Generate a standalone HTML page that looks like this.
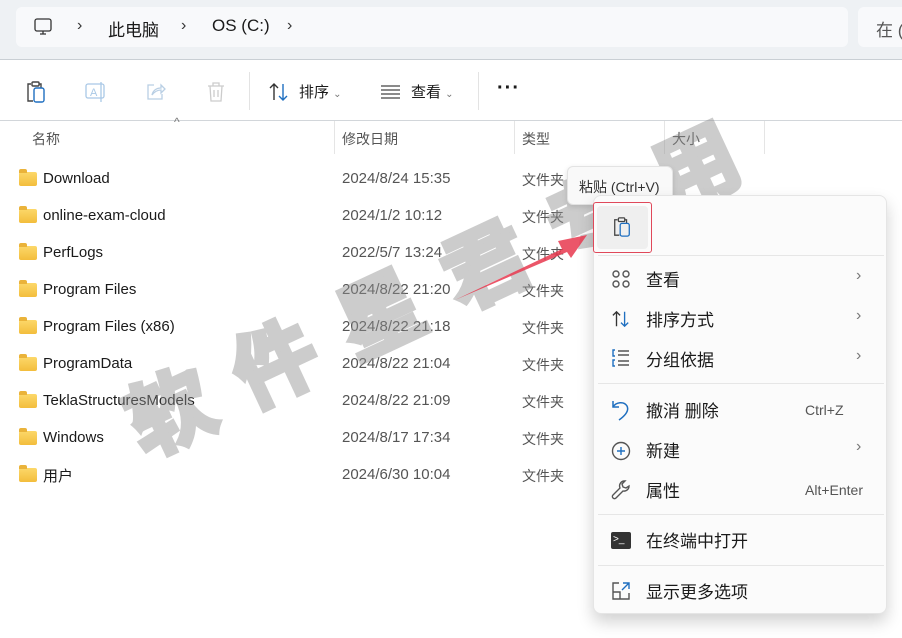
<!DOCTYPE html>
<html><head><meta charset="utf-8"><style>
*{margin:0;padding:0;box-sizing:border-box}
body{width:902px;height:638px;overflow:hidden;background:#fff;font-family:"Liberation Sans","Noto Sans CJK SC",sans-serif;position:relative;color:#1a1a1a}
.top{position:absolute;left:0;top:0;width:902px;height:60px;background:#eef1f4;border-bottom:1px solid #c9cfd4}
.addr{position:absolute;left:16px;top:7px;width:832px;height:40px;background:#f8f9fb;border-radius:6px}
.srch{position:absolute;left:858px;top:7px;width:60px;height:40px;background:#f8f9fb;border-radius:6px}
.t{position:absolute;white-space:nowrap}
.tb{position:absolute;top:61px;left:0;width:902px;height:60px;border-bottom:1px solid #d2d6da;background:#fff}
.vs{position:absolute;top:11px;width:1px;height:38px;background:#e3e3e3}
.row{position:absolute;left:0;height:37px;width:600px;font-size:15px}
.fold{position:absolute;left:19px;top:11px;width:18px;height:14px;background:linear-gradient(#fcd86a,#f3bd3c);border-radius:2px}
.fold:before{content:"";position:absolute;left:0;top:-3px;width:8px;height:4px;background:#eab33a;border-radius:2px 2px 0 0}
.menu{position:absolute;left:593px;top:195px;width:294px;height:419px;background:#fbfbfb;border:1px solid #e5e5e5;border-radius:8px;box-shadow:0 8px 16px rgba(0,0,0,.18)}
.mi{position:absolute;left:52px;font-size:17px;color:#1a1a1a}
.sc{position:absolute;font-size:14px;color:#555}
.ch{position:absolute;left:262px;font-size:16px;color:#777}
.sep{position:absolute;left:4px;width:286px;height:1px;background:#e6e6e6}
.wm{position:absolute;left:130px;top:365px;font-size:84px;font-weight:bold;color:#8f8f8f;-webkit-text-stroke:5px #8f8f8f;opacity:.45;transform:rotate(-25deg);transform-origin:left center;letter-spacing:32px;font-family:"Noto Sans CJK SC",sans-serif;white-space:nowrap}
</style></head><body>
<div class="top"><div class="addr"></div><div class="srch"></div>
<svg class="t" style="left:33px;top:17px" width="20" height="20" viewBox="0 0 20 20" fill="none" stroke="#333" stroke-width="1.3"><rect x="2" y="2" width="16" height="12" rx="2"/><path d="M7 17h6M10 14v3"/></svg>
<div class="t" style="left:77px;top:17px;font-size:16px;color:#333">›</div>
<div class="t" style="left:108px;top:16px;font-size:17px">此电脑</div>
<div class="t" style="left:181px;top:17px;font-size:16px;color:#333">›</div>
<div class="t" style="left:212px;top:16px;font-size:17px">OS (C:)</div>
<div class="t" style="left:287px;top:17px;font-size:16px;color:#333">›</div>
<div class="t" style="left:876px;top:16px;font-size:17px;color:#555">在 (</div>
</div>
<div class="tb">
<svg class="t" style="left:25px;top:19px" width="22" height="24" viewBox="0 0 22 24" fill="none" stroke-width="1.4"><path d="M6 4H3v17h5" stroke="#444"/><rect x="7" y="2" width="7" height="4" rx="1" stroke="#444"/><path d="M14 4h2v4" stroke="#444"/><rect x="9" y="8" width="10" height="14" rx="2" stroke="#1f6fc0"/></svg>
<svg class="t" style="left:84px;top:20px" width="24" height="22" viewBox="0 0 24 22" fill="none" stroke="#a9c8e6" stroke-width="1.3"><rect x="2" y="3" width="18" height="14" rx="2"/><text x="6" y="15" font-size="11" fill="#a9c8e6" stroke="none">A</text><path d="M17 1v20"/></svg>
<svg class="t" style="left:145px;top:20px" width="22" height="22" viewBox="0 0 22 22" fill="none" stroke="#b9cfe4" stroke-width="1.3"><path d="M9 4H3v14h14v-5"/><path d="M7 14c1-5 5-7 9-7V4l4 4-4 4V9c-3 0-6 1-9 5z"/></svg>
<svg class="t" style="left:206px;top:20px" width="20" height="22" viewBox="0 0 20 22" fill="none" stroke="#ccc" stroke-width="1.3"><path d="M2 5h16M7 5V2h6v3M4 5l1 15h10l1-15M8 9v7M12 9v7"/></svg>
<div class="vs" style="left:249px"></div>
<svg class="t" style="left:268px;top:21px" width="22" height="20" viewBox="0 0 22 20" fill="none" stroke-width="1.4"><path d="M6 18V2M2 6l4-4 4 4" stroke="#333"/><path d="M15 2v16M11 14l4 4 4-4" stroke="#1f6fc0"/></svg>
<div class="t" style="left:299px;top:20px;font-size:15px">排序 <span style="font-size:10px;color:#777">⌄</span></div>
<svg class="t" style="left:380px;top:23px" width="22" height="16" viewBox="0 0 22 16" stroke="#444" stroke-width="1.3"><path d="M1 2h19M1 6h19M1 10h19M1 14h19"/></svg>
<div class="t" style="left:411px;top:20px;font-size:15px">查看 <span style="font-size:10px;color:#777">⌄</span></div>
<div class="vs" style="left:478px"></div>
<div class="t" style="left:497px;top:16px;font-size:20px;font-weight:bold;letter-spacing:1px">···</div>
</div>
<div class="t" style="left:174px;top:115px;font-size:12px;color:#777">^</div>
<div class="t" style="left:32px;top:129px;font-size:14px;color:#555">名称</div>
<div class="t" style="left:334px;top:121px;width:1px;height:33px;background:#e5e5e5"></div>
<div class="t" style="left:342px;top:129px;font-size:14px;color:#555">修改日期</div>
<div class="t" style="left:514px;top:121px;width:1px;height:33px;background:#e5e5e5"></div>
<div class="t" style="left:522px;top:129px;font-size:14px;color:#555">类型</div>
<div class="t" style="left:664px;top:121px;width:1px;height:33px;background:#e5e5e5"></div>
<div class="t" style="left:672px;top:129px;font-size:14px;color:#555">大小</div>
<div class="t" style="left:764px;top:121px;width:1px;height:33px;background:#e5e5e5"></div>

<div class="row" style="top:161px"><div class="fold"></div><span class="t" style="left:43px;top:9px">Download</span><span class="t" style="left:342px;top:9px;color:#555">2024/8/24 15:35</span><span class="t" style="left:522px;top:9px;color:#555;font-size:14px">文件夹</span></div>
<div class="row" style="top:198px"><div class="fold"></div><span class="t" style="left:43px;top:9px">online-exam-cloud</span><span class="t" style="left:342px;top:9px;color:#555">2024/1/2 10:12</span><span class="t" style="left:522px;top:9px;color:#555;font-size:14px">文件夹</span></div>
<div class="row" style="top:235px"><div class="fold"></div><span class="t" style="left:43px;top:9px">PerfLogs</span><span class="t" style="left:342px;top:9px;color:#555">2022/5/7 13:24</span><span class="t" style="left:522px;top:9px;color:#555;font-size:14px">文件夹</span></div>
<div class="row" style="top:272px"><div class="fold"></div><span class="t" style="left:43px;top:9px">Program Files</span><span class="t" style="left:342px;top:9px;color:#555">2024/8/22 21:20</span><span class="t" style="left:522px;top:9px;color:#555;font-size:14px">文件夹</span></div>
<div class="row" style="top:309px"><div class="fold"></div><span class="t" style="left:43px;top:9px">Program Files (x86)</span><span class="t" style="left:342px;top:9px;color:#555">2024/8/22 21:18</span><span class="t" style="left:522px;top:9px;color:#555;font-size:14px">文件夹</span></div>
<div class="row" style="top:346px"><div class="fold"></div><span class="t" style="left:43px;top:9px">ProgramData</span><span class="t" style="left:342px;top:9px;color:#555">2024/8/22 21:04</span><span class="t" style="left:522px;top:9px;color:#555;font-size:14px">文件夹</span></div>
<div class="row" style="top:383px"><div class="fold"></div><span class="t" style="left:43px;top:9px">TeklaStructuresModels</span><span class="t" style="left:342px;top:9px;color:#555">2024/8/22 21:09</span><span class="t" style="left:522px;top:9px;color:#555;font-size:14px">文件夹</span></div>
<div class="row" style="top:420px"><div class="fold"></div><span class="t" style="left:43px;top:9px">Windows</span><span class="t" style="left:342px;top:9px;color:#555">2024/8/17 17:34</span><span class="t" style="left:522px;top:9px;color:#555;font-size:14px">文件夹</span></div>
<div class="row" style="top:457px"><div class="fold"></div><span class="t" style="left:43px;top:8px">用户</span><span class="t" style="left:342px;top:9px;color:#555">2024/6/30 10:04</span><span class="t" style="left:522px;top:9px;color:#555;font-size:14px">文件夹</span></div>

<div class="wm">软件星君专用</div>

<div class="t" style="left:567px;top:166px;width:106px;height:39px;background:#f9f9f9;border:1px solid #e3e3e3;border-radius:6px;box-shadow:0 2px 6px rgba(0,0,0,.12);font-size:14px;padding:10px 0 0 11px;color:#333">粘贴 (Ctrl+V)</div>

<div class="menu">
<div class="t" style="left:-1px;top:6px;width:59px;height:51px;border:1.5px solid #e0485a;border-radius:3px"></div>
<div class="t" style="left:3px;top:10px;width:51px;height:43px;background:#efefef;border-radius:4px"></div>
<svg class="t" style="left:18px;top:19px" width="20" height="24" viewBox="0 0 22 24" fill="none" stroke-width="1.4"><path d="M6 4H3v17h5" stroke="#444"/><rect x="7" y="2" width="7" height="4" rx="1" stroke="#444"/><path d="M14 4h2v4" stroke="#444"/><rect x="9" y="8" width="10" height="14" rx="2" stroke="#1f6fc0"/></svg>
<div class="sep" style="top:59px"></div>
<svg class="t" style="left:18px;top:74px" width="18" height="18" viewBox="0 0 18 18" fill="none" stroke="#555" stroke-width="1.4"><rect x="1" y="1" width="6" height="6" rx="3"/><rect x="11" y="1" width="6" height="6" rx="3"/><rect x="1" y="11" width="6" height="6" rx="3"/><rect x="11" y="11" width="6" height="6" rx="3"/></svg>
<div class="mi" style="top:70px">查看</div><div class="ch" style="top:71px">›</div>
<svg class="t" style="left:17px;top:114px" width="20" height="18" viewBox="0 0 22 20" fill="none" stroke-width="1.5"><path d="M6 18V2M2 6l4-4 4 4" stroke="#333"/><path d="M15 2v16M11 14l4 4 4-4" stroke="#1f6fc0"/></svg>
<div class="mi" style="top:110px">排序方式</div><div class="ch" style="top:111px">›</div>
<svg class="t" style="left:18px;top:153px" width="18" height="18" viewBox="0 0 18 18" fill="none" stroke-width="1.4"><path d="M3 1H1v6h2M3 11H1v6h2" stroke="#1f6fc0"/><path d="M6 2h11M6 6h11M6 12h11M6 16h11" stroke="#555"/></svg>
<div class="mi" style="top:150px">分组依据</div><div class="ch" style="top:151px">›</div>
<div class="sep" style="top:187px"></div>
<svg class="t" style="left:17px;top:203px" width="20" height="22" viewBox="0 0 20 22" fill="none" stroke="#1f6fc0" stroke-width="1.5"><path d="M2 2v6h6"/><path d="M2 8c3-5 11-6 14-1 2 4-1 9-8 14"/></svg>
<div class="mi" style="top:201px">撤消 删除</div><div class="sc" style="left:211px;top:206px">Ctrl+Z</div>
<svg class="t" style="left:17px;top:245px" width="20" height="20" viewBox="0 0 20 20" fill="none" stroke-width="1.4"><circle cx="10" cy="10" r="8.5" stroke="#555"/><path d="M10 6v8M6 10h8" stroke="#1f6fc0"/></svg>
<div class="mi" style="top:241px">新建</div><div class="ch" style="top:242px">›</div>
<svg class="t" style="left:17px;top:283px" width="20" height="22" viewBox="0 0 20 22" fill="none" stroke="#555" stroke-width="1.4"><path d="M13 2a5 5 0 0 0-4 7L2 16a2 2 0 0 0 3 3l7-7a5 5 0 0 0 6-5l-3 2-3-1-1-3 3-3z"/></svg>
<div class="mi" style="top:281px">属性</div><div class="sc" style="left:211px;top:286px">Alt+Enter</div>
<div class="sep" style="top:318px"></div>
<div class="t" style="left:17px;top:336px;width:20px;height:17px;background:#333;border-radius:2px;color:#fff;font-size:10px;padding:2px 0 0 2px;line-height:12px">&gt;_</div>
<div class="mi" style="top:331px">在终端中打开</div>
<div class="sep" style="top:369px"></div>
<svg class="t" style="left:17px;top:385px" width="20" height="20" viewBox="0 0 20 20" fill="none" stroke-width="1.4"><path d="M8 2H2v16h16v-6M2 11h7v7" stroke="#555"/><path d="M12 2h6v6M18 2l-7 7" stroke="#1f6fc0"/></svg>
<div class="mi" style="top:382px">显示更多选项</div>
</div>

<svg class="t" style="left:450px;top:230px" width="145" height="80" viewBox="0 0 145 80"><path d="M5 70L112 19L108 11L137 5L121 28L117 22Z" fill="#e8384f" opacity=".85"/></svg>
</body></html>
